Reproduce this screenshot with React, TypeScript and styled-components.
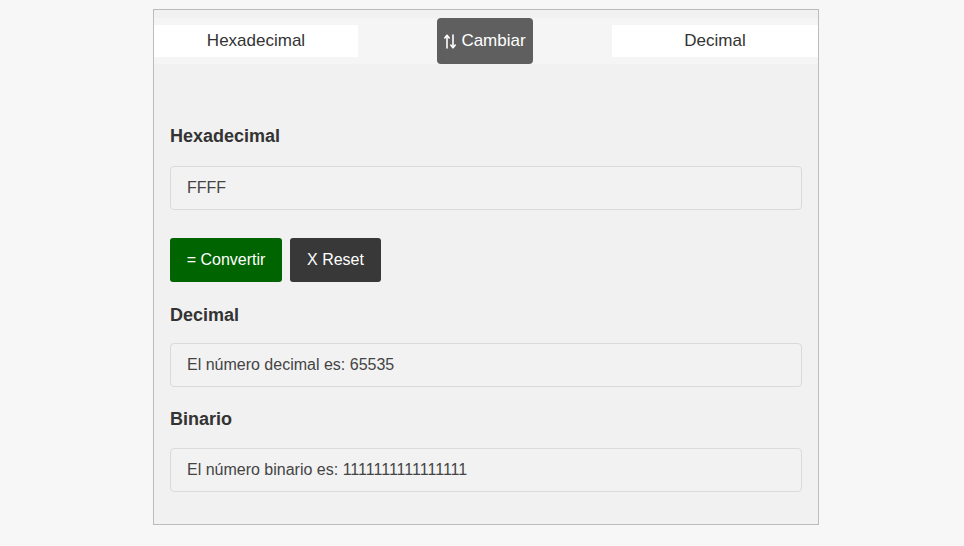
import styled, { createGlobalStyle } from 'styled-components';

const GlobalStyle = createGlobalStyle`
  html, body {
    margin: 0;
    padding: 0;
    background: #f7f7f7;
    font-family: 'Liberation Sans', Arial, sans-serif;
    color: #333333;
  }
`;

const Page = styled.div`
  padding: 9px 0 0 153px;
`;

const Converter = styled.div`
  width: 664px;
  border: 1px solid #bcbcbc;
  background: #f1f1f1;
  padding-top: 8px;
`;

const Toolbar = styled.div`
  display: flex;
  align-items: center;
  justify-content: space-between;
  background: #f5f5f5;
`;

const BaseTab = styled.div<{ $width: number }>`
  width: ${(p) => p.$width}px;
  height: 32px;
  background: #ffffff;
  display: flex;
  align-items: center;
  justify-content: center;
  font-size: 17px;
  color: #333333;
`;

const SwapButton = styled.button`
  width: 96px;
  height: 46px;
  border: none;
  border-radius: 4px;
  background: #5f5f5f;
  color: #ffffff;
  font-family: inherit;
  font-size: 17px;
  padding: 0;
  display: flex;
  align-items: center;
  justify-content: center;
  gap: 5px;
`;

const Body = styled.div`
  padding: 61px 16px 32px;
`;

const Label = styled.h3<{ $gap: number }>`
  margin: 0 0 ${(p) => p.$gap}px;
  font-size: 18px;
  line-height: 22px;
  font-weight: bold;
  color: #333333;
`;

const Field = styled.div`
  height: 42px;
  border: 1px solid #dadada;
  border-radius: 4px;
  background: #f2f2f2;
  display: flex;
  align-items: center;
  padding: 0 16px;
  font-size: 16px;
  color: #444444;
`;

const Actions = styled.div`
  display: flex;
  gap: 8px;
  margin: 28px 0 22px;
`;

const ActionButton = styled.button<{ $bg: string; $width: number }>`
  width: ${(p) => p.$width}px;
  height: 44px;
  border: none;
  border-radius: 3px;
  background: ${(p) => p.$bg};
  color: #ffffff;
  font-family: inherit;
  font-size: 16px;
  padding: 0;
`;

const Section = styled.div`
  & + & {
    margin-top: 21px;
  }
`;

const SwapIcon = () => (
  <svg width="12" height="15" viewBox="0 0 12 15" fill="none" stroke="#ffffff" strokeWidth="1.6" strokeLinecap="round" strokeLinejoin="round">
    <path d="M3 14V1.5" />
    <path d="M0.8 4L3 1.3L5.2 4" />
    <path d="M9 1V13.5" />
    <path d="M6.8 11L9 13.7L11.2 11" />
  </svg>
);

export default function App() {
  return (
    <Page>
      <GlobalStyle />
      <Converter>
        <Toolbar>
          <BaseTab $width={204}>Hexadecimal</BaseTab>
          <SwapButton>
            <SwapIcon />
            Cambiar
          </SwapButton>
          <BaseTab $width={206}>Decimal</BaseTab>
        </Toolbar>
        <Body>
          <Label $gap={19}>Hexadecimal</Label>
          <Field>FFFF</Field>
          <Actions>
            <ActionButton $bg="#006400" $width={112}>= Convertir</ActionButton>
            <ActionButton $bg="#383838" $width={91}>X Reset</ActionButton>
          </Actions>
          <Section>
            <Label $gap={17}>Decimal</Label>
            <Field>El número decimal es: 65535</Field>
          </Section>
          <Section>
            <Label $gap={18}>Binario</Label>
            <Field>El número binario es: 1111111111111111</Field>
          </Section>
        </Body>
      </Converter>
    </Page>
  );
}
